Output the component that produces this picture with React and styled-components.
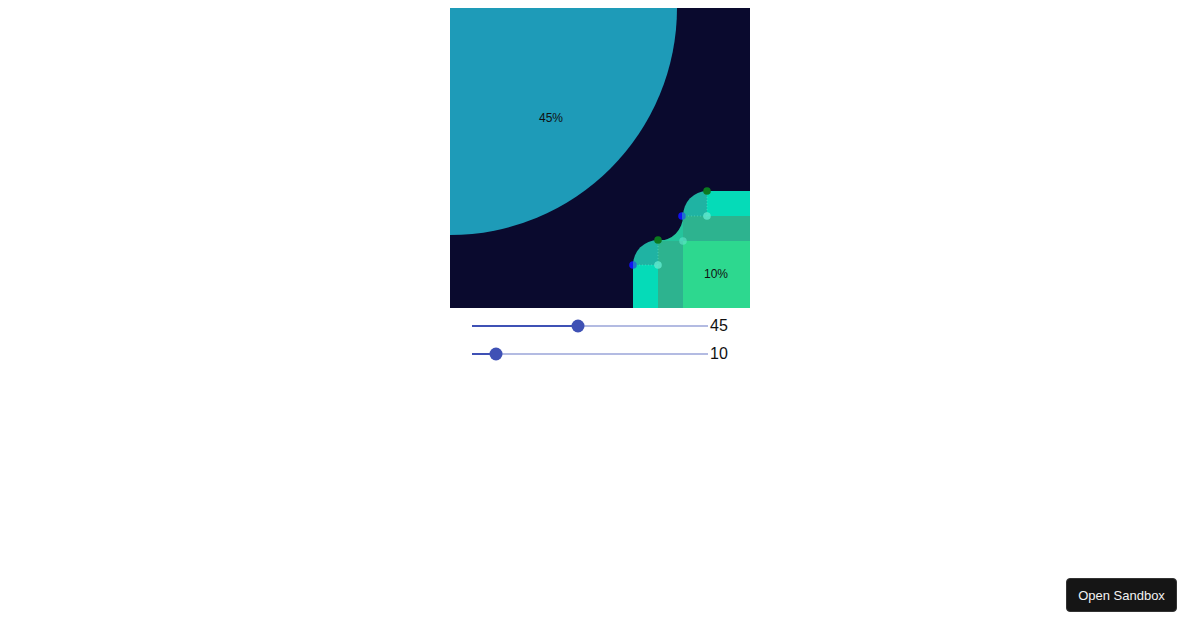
import React from "react";
import styled, { createGlobalStyle } from "styled-components";

const GlobalStyle = createGlobalStyle`
  body {
    margin: 8px;
    background: #ffffff;
    font-family: "Liberation Sans", Arial, sans-serif;
  }
`;

export default function App() {
  const [radius, setRadius] = React.useState(45);
  const [inner, setInner] = React.useState(10);

  return (
    <>
      <GlobalStyle />
      <Page>
        <Canvas>
          <svg width="300" height="300" viewBox="0 0 300 300">
            {/* big rounded corner */}
            <circle cx="0" cy="0" r="227" fill="#1e9bb8" />
            <Label x="101" y="114">{radius}%</Label>

            {/* upper step */}
            <path d="M233,208 A24,25 0 0 1 257,183 L257,208 Z" fill="#1fb3a3" />
            <rect x="257" y="183" width="43" height="25" fill="#05dbb8" />
            <rect x="233" y="208" width="67" height="25" fill="#2db38f" />
            <rect x="233" y="233" width="67" height="67" fill="#2dd88f" />

            {/* lower step */}
            <path d="M183,257 A25,25 0 0 1 208,232 L208,257 Z" fill="#1fb3a3" />
            <rect x="183" y="257" width="25" height="43" fill="#05dbb8" />
            <rect x="208" y="232" width="25" height="68" fill="#2db38f" />

            {/* concave fillet between the steps */}
            <path d="M233,208 A25,25 0 0 1 208,233 L233,233 Z" fill="#25c49c" />

            {/* guide lines */}
            <g stroke="#6ff0d4" strokeWidth="1" strokeDasharray="1 2" opacity="0.45">
              <line x1="232" y1="208" x2="257" y2="208" />
              <line x1="257" y1="183" x2="257" y2="208" />
              <line x1="183" y1="257" x2="208" y2="257" />
              <line x1="208" y1="232" x2="208" y2="257" />
            </g>

            {/* handles */}
            <circle cx="257" cy="183" r="3.8" fill="#0b7a1f" />
            <circle cx="208" cy="232" r="3.8" fill="#0b7a1f" />
            <path d="M232,204.2 A3.8,3.8 0 0 0 232,211.8 Z" fill="#1010f0" />
            <path d="M232,204.2 A3.8,3.8 0 0 1 232,211.8 Z" fill="#1f6fd0" />
            <path d="M183,253.2 A3.8,3.8 0 0 0 183,260.8 Z" fill="#1010f0" />
            <path d="M183,253.2 A3.8,3.8 0 0 1 183,260.8 Z" fill="#1f6fd0" />
            <circle cx="257" cy="208" r="3.8" fill="#5fe6cc" opacity="0.85" />
            <circle cx="208" cy="257" r="3.8" fill="#5fe6cc" opacity="0.85" />
            <circle cx="233" cy="233" r="3.8" fill="#5fe6cc" opacity="0.6" />

            <Label x="266" y="270">{inner}%</Label>
          </svg>
        </Canvas>

        <Controls>
          <Slider value={radius} onChange={setRadius} />
          <Slider value={inner} onChange={setInner} />
        </Controls>
      </Page>

      <SandboxButton>Open Sandbox</SandboxButton>
    </>
  );
}

function Slider({ value, onChange }) {
  const trackRef = React.useRef(null);

  const handleDown = e => {
    const move = ev => {
      const box = trackRef.current.getBoundingClientRect();
      const pct = Math.round(((ev.clientX - box.left) / box.width) * 100);
      onChange(Math.max(0, Math.min(100, pct)));
    };
    move(e);
    const up = () => {
      window.removeEventListener("pointermove", move);
      window.removeEventListener("pointerup", up);
    };
    window.addEventListener("pointermove", move);
    window.addEventListener("pointerup", up);
  };

  return (
    <Row>
      <Track ref={trackRef} onPointerDown={handleDown}>
        <Fill style={{ width: `${value}%` }} />
        <Thumb style={{ left: `${value}%` }} />
      </Track>
      <Value>{value}</Value>
    </Row>
  );
}

const Page = styled.div`
  width: 300px;
  margin: 0 auto;
`;

const Canvas = styled.div`
  width: 300px;
  height: 300px;
  background: #0a0a2e;
  overflow: hidden;

  svg {
    display: block;
  }
`;

const Label = styled.text`
  font-family: "Liberation Sans", Arial, sans-serif;
  font-size: 12px;
  fill: #111;
  text-anchor: middle;
`;

const Controls = styled.div`
  padding-top: 4px;
  display: flex;
  flex-direction: column;
`;

const Row = styled.div`
  height: 28px;
  display: flex;
  align-items: center;
  justify-content: center;
`;

const Track = styled.div`
  position: relative;
  width: 236px;
  height: 2px;
  background: #b3bbe2;
  cursor: pointer;
  touch-action: none;
`;

const Fill = styled.div`
  height: 100%;
  background: #3f51b5;
`;

const Thumb = styled.div`
  position: absolute;
  top: 50%;
  width: 13px;
  height: 13px;
  border-radius: 50%;
  background: #3f51b5;
  transform: translate(-50%, -50%);
`;

const Value = styled.span`
  margin-left: 2px;
  width: 18px;
  font-size: 16px;
  color: #111;
  line-height: 1;
`;

const SandboxButton = styled.button`
  position: fixed;
  right: 23px;
  bottom: 18px;
  width: 111px;
  height: 34px;
  padding: 0;
  background: #151515;
  color: #f2f2f2;
  border: 1px solid #333;
  border-radius: 4px;
  font-family: "Liberation Sans", Arial, sans-serif;
  font-size: 13px;
  cursor: pointer;
`;
